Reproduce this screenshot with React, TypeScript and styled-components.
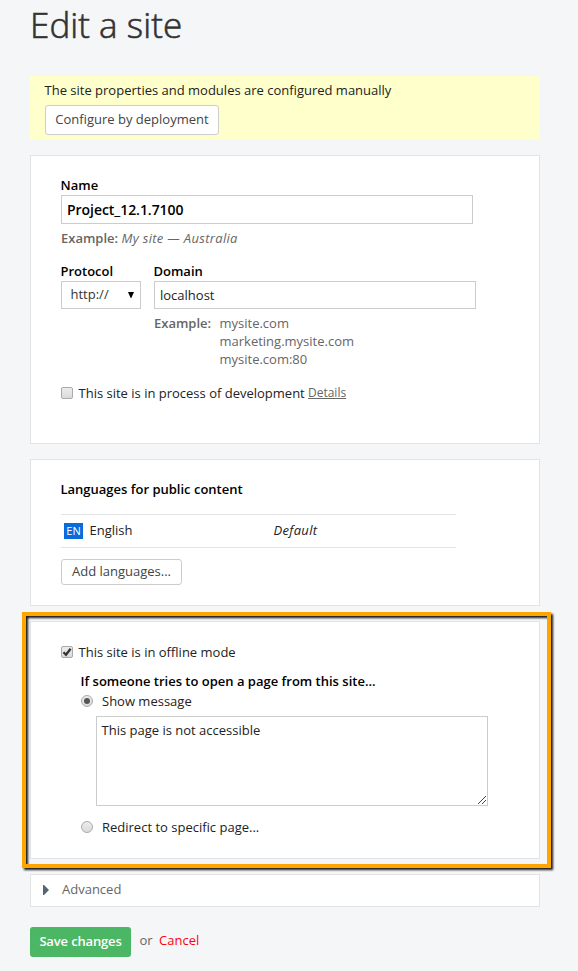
import React from "react";
import styled, { createGlobalStyle } from "styled-components";

const GlobalStyle = createGlobalStyle`
  * { box-sizing: border-box; }
  body {
    margin: 0;
    background: #f4f6f8;
    font-family: "Open Sans", sans-serif;
    font-size: 13px;
    line-height: 18px;
    color: #222;
  }
`;

const Page = styled.main`
  width: 578px;
  height: 971px;
  padding: 0 38px 0 30px;
  overflow: hidden;
`;

const Title = styled.h1`
  margin: 0;
  height: 76px;
  font-size: 35px;
  font-weight: 300;
  line-height: 50px;
  letter-spacing: 0.05px;
  color: #333;
  -webkit-text-stroke: 0.6px #333;
`;

const Notice = styled.section`
  height: 64px;
  margin-bottom: 15px;
  padding: 5px 15px 0;
  background: #ffffcc;
`;

const NoticeText = styled.p`
  margin: 0 0 6px -0.5px;
`;

const Button = styled.button<{ $height: number; $width: number }>`
  display: block;
  width: ${(p) => p.$width}px;
  height: ${(p) => p.$height}px;
  padding: 0 0 2px;
  border: 1px solid #ccc;
  border-radius: 3px;
  background: #fff;
  color: #444;
  font: inherit;
  white-space: nowrap;
`;

const Panel = styled.section<{ $height: number }>`
  position: relative;
  height: ${(p) => p.$height}px;
  margin-bottom: 15px;
  padding: 20px 30px 0;
  border: 1px solid #e1e3e5;
  background: #fff;
`;

const Label = styled.label`
  display: block;
  height: 19px;
  margin-left: -0.5px;
  font-weight: 600;
  color: #000;
`;

const NameInput = styled.input`
  display: block;
  width: 412px;
  height: 29px;
  padding: 0 5px;
  border: 1px solid #ccc;
  border-radius: 0;
  font: 600 14px "Open Sans", sans-serif;
  letter-spacing: -0.05px;
  color: #000;
`;

const DomainInput = styled(NameInput)`
  width: 322px;
  height: 28px;
  font-size: 13px;
  font-weight: 400;
  letter-spacing: 0;
  color: #222;
`;

const Hint = styled.p`
  margin: 5px 0 15px;
  color: #666;
  b { font-weight: 600; }
  em { letter-spacing: 0.32px; }
`;

const AddressRow = styled.div`
  display: grid;
  grid-template-columns: 80px 322px;
  column-gap: 13px;
`;

const Select = styled.div`
  display: flex;
  align-items: center;
  justify-content: space-between;
  height: 28px;
  padding: 0 6px 2px 8.5px;
  border: 1px solid #ccc;
  color: #333;
`;

const Caret = styled.svg`
  width: 6px;
  height: 6px;
  margin-top: 2px;
`;

const Examples = styled.div`
  display: flex;
  margin-top: 5px;
  color: #666;
  b { width: 65.5px; font-weight: 600; }
`;

const Option = styled.div<{ $gap: number; $top?: number }>`
  display: flex;
  align-items: center;
  gap: ${(p) => p.$gap}px;
  margin-top: ${(p) => p.$top ?? 0}px;
  height: 18px;
  white-space: nowrap;
`;

const Check = styled.span<{ $round?: boolean }>`
  display: flex;
  flex: none;
  width: 12px;
  height: 12px;
  border: 1px solid #aaa;
  border-radius: ${(p) => (p.$round ? "50%" : "2px")};
  background: linear-gradient(#ececec, #dadada);
  svg { flex: none; width: 10px; height: 10px; }
`;

const Details = styled.a`
  margin: -1px 0 0 -2.3px;
  font-size: 12px;
  color: #666;
  text-decoration: underline;
`;

const LanguageRow = styled.div`
  display: grid;
  grid-template-columns: 25.5px 184px 1fr;
  align-items: center;
  width: 395px;
  height: 34px;
  margin: 15px 0 11px;
  padding: 0 0 2px 3px;
  border: solid #e1e3e5;
  border-width: 1px 0;
  em { letter-spacing: 0.32px; }
`;

const Badge = styled.span`
  width: 19px;
  height: 16px;
  margin-top: 2px;
  background: #0a6cdb;
  color: #fff;
  font-size: 11px;
  line-height: 16px;
  text-align: center;
`;

const Nested = styled.div`
  padding: 11px 0 0 20px;
`;

const Message = styled.div`
  position: relative;
  width: 392px;
  height: 90px;
  margin: 6px 0 12px 15px;
  padding: 4px 4.5px;
  border: 1px solid #ccc;
`;

const Grip = styled.svg`
  position: absolute;
  right: 1px;
  bottom: 1px;
  width: 8px;
  height: 8px;
`;

const Highlight = styled.div`
  position: absolute;
  z-index: 1;
  top: -10px;
  left: -9px;
  width: 529px;
  height: 256px;
  border: 4px solid #ffa500;
  filter: drop-shadow(2px 2px 1.3px rgba(0, 0, 0, 0.9));
  pointer-events: none;
`;

const Advanced = styled.section`
  display: flex;
  align-items: center;
  height: 33px;
  margin-bottom: 20px;
  padding: 0 12px 3px;
  border: 1px solid #e1e3e5;
  background: #fff;
  color: #666;
`;

const Expander = styled.svg`
  width: 6px;
  height: 10px;
  margin: 2px 13px 0 0;
`;

const Footer = styled.footer`
  display: flex;
  color: #666;
`;

const Save = styled.button`
  width: 101px;
  height: 30px;
  margin-right: 8.5px;
  padding: 0 0 2px;
  border: 0;
  border-radius: 3px;
  background: #4bb663;
  color: #fff;
  font: 600 13px "Open Sans", sans-serif;
  letter-spacing: -0.15px;
`;

const FooterText = styled.span`
  padding-top: 4px;
  a { margin-left: 3px; color: #f01; }
`;

export default function App() {
  return (
    <Page>
      <GlobalStyle />
      <Title>Edit a site</Title>
      <Notice>
        <NoticeText>The site properties and modules are configured manually</NoticeText>
        <Button $width={174} $height={30}>Configure by deployment</Button>
      </Notice>

      <Panel $height={289}>
        <Label>Name</Label>
        <NameInput defaultValue="Project_12.1.7100" />
        <Hint><b>Example:</b> <em>My site — Australia</em></Hint>
        <AddressRow>
          <div>
            <Label>Protocol</Label>
            <Select>
              http://
              <Caret viewBox="0 0 6 6"><path d="M0 0h6L3.3 6h-.6z" fill="#000" /></Caret>
            </Select>
          </div>
          <div>
            <Label>Domain</Label>
            <DomainInput defaultValue="localhost" />
            <Examples>
              <b>Example:</b>
              <div>mysite.com<br />marketing.mysite.com<br />mysite.com:80</div>
            </Examples>
          </div>
        </AddressRow>
        <Option $gap={5.5} $top={16}>
          <Check />
          <span>This site is in process of development</span>
          <Details>Details</Details>
        </Option>
      </Panel>

      <Panel $height={147}>
        <Label>Languages for public content</Label>
        <LanguageRow>
          <Badge>EN</Badge>
          <span>English</span>
          <em>Default</em>
        </LanguageRow>
        <Button $width={121} $height={26}>Add languages...</Button>
      </Panel>

      <Panel $height={238}>
        <Highlight />
        <Option $gap={5.5} $top={1}>
          <Check>
            <svg viewBox="0 0 10 10"><path d="M1.5 5.2 4 7.8 8.6 1.8" fill="none" stroke="#333" strokeWidth="2.3" /></svg>
          </Check>
          <span>This site is in offline mode</span>
        </Option>
        <Nested>
          <Label>If someone tries to open a page from this site...</Label>
          <Option $gap={9} $top={1}>
            <Check $round>
              <svg viewBox="0 0 10 10"><circle cx="5" cy="5" r="3" fill="#555" /></svg>
            </Check>
            <span>Show message</span>
          </Option>
          <Message>
            This page is not accessible
            <Grip viewBox="0 0 8 8" shapeRendering="crispEdges">
              <path d="M0 7h1v1H0zM1 6h1v1H1zM2 5h1v1H2zM3 4h1v1H3zM4 3h1v1H4zM5 2h1v1H5zM6 1h1v1H6zM7 0h1v1H7zM4 7h1v1H4zM5 6h1v1H5zM6 5h1v1H6zM7 4h1v1H7z" fill="#444" />
            </Grip>
          </Message>
          <Option $gap={9}>
            <Check $round />
            <span>Redirect to specific page...</span>
          </Option>
        </Nested>
      </Panel>

      <Advanced>
        <Expander viewBox="0 0 6 10"><path d="M0 0h1l5 5-5 5H0z" fill="#566573" /></Expander>
        Advanced
      </Advanced>

      <Footer>
        <Save>Save changes</Save>
        <FooterText>or <a>Cancel</a></FooterText>
      </Footer>
    </Page>
  );
}
